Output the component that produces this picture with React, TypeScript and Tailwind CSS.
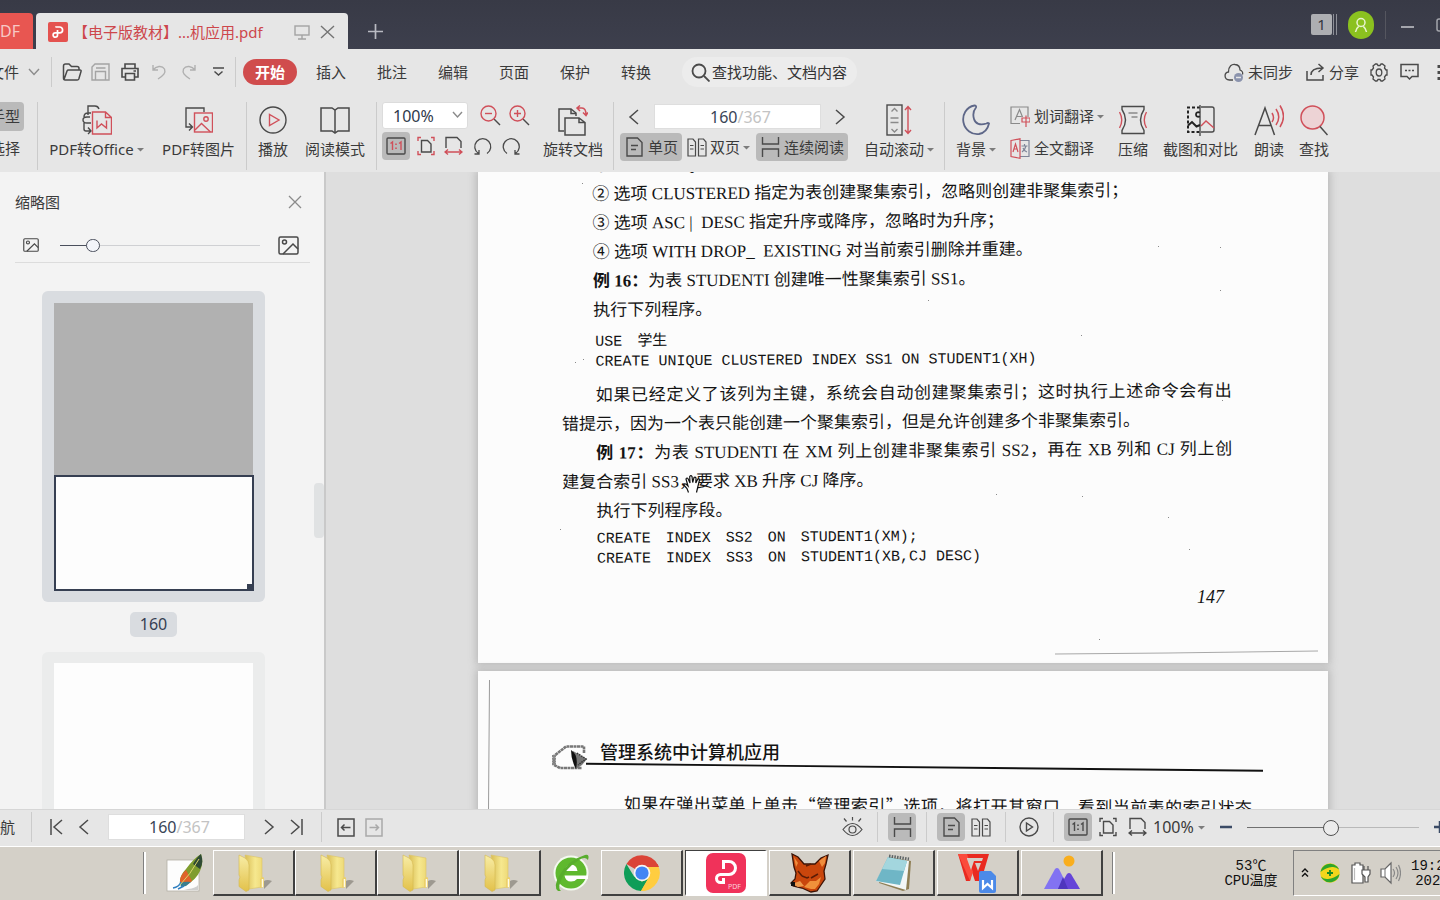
import type { ReactNode } from "react";

const INK = "#4a4a4a";
const RED = "#d0505a";

function Icon({
  w,
  h,
  children,
  color = INK,
  stroke = 1.4,
}: {
  w: number;
  h: number;
  children: ReactNode;
  color?: string;
  stroke?: number;
}) {
  return (
    <svg
      width={w}
      height={h}
      viewBox={`0 0 ${w} ${h}`}
      fill="none"
      stroke={color}
      strokeWidth={stroke}
      className="shrink-0"
      aria-hidden="true"
    >
      {children}
    </svg>
  );
}

function Caret() {
  return (
    <svg width="7" height="5" viewBox="0 0 7 5" className="shrink-0" aria-hidden="true">
      <path d="M0 1h7L3.5 4.5z" fill="#7c7c7c" />
    </svg>
  );
}

function BigButton({
  label,
  icon,
  className,
  caret = false,
}: {
  label: string;
  icon: ReactNode;
  className: string;
  caret?: boolean;
}) {
  return (
    <button type="button" className={"flex shrink-0 flex-col items-center gap-[3px] " + className}>
      <span className="flex h-8 items-center justify-center">{icon}</span>
      <span className="flex items-center gap-[3px] leading-5 whitespace-nowrap">
        {label}
        {caret && <Caret />}
      </span>
    </button>
  );
}

function Separator({ className }: { className: string }) {
  return <div className={"w-px shrink-0 bg-[#cbcbcb] " + className} />;
}

/* ---------- page display icons shared by the ribbon and the status bar ---------- */

function OneToOne({ accent }: { accent: string }) {
  return (
    <Icon w={20} h={18}>
      <rect x="1" y="1" width="18" height="16" rx="1" />
      <path d="M4.5 6.5 6.5 5v8M13 6.5 15 5v8" stroke={accent} />
      <path d="M10 6.5v1.5M10 10.5v1.5" stroke={accent} strokeWidth="1.6" />
    </Icon>
  );
}

function FitPage({ accent }: { accent: string }) {
  return (
    <Icon w={18} h={20}>
      <path d="M4.5 4.5h6L14 8v8H4.5z" />
      <path d="M1 5V1.5h3M14 1.5h3V5M1 15v3.5h3M14 18.5h3V15" stroke={accent} />
    </Icon>
  );
}

function FitWidth({ accent }: { accent: string }) {
  return (
    <Icon w={19} h={20}>
      <path d="M2 12V1.5h11l4 4V12" />
      <path d="M1 16h17M4 13.5 1 16l3 2.5M15 13.5l3 2.5-3 2.5" stroke={accent} />
    </Icon>
  );
}

function SinglePage() {
  return (
    <Icon w={17} h={20}>
      <path d="M1 1h10.5L16 5.500V19H1z" />
      <path d="M5 8.500h7M5 12.500h5" />
    </Icon>
  );
}

function DoublePage() {
  return (
    <Icon w={20} h={19} stroke={1.2}>
      <path d="M1 1h5l2.500 3v14H1zM11.500 1h5L19 4v14h-7.500z" />
      <path d="M3 7.500h3.500M3 11h3.500M13.500 7.500H17M13.500 11H17" />
    </Icon>
  );
}

function Continuous() {
  return (
    <Icon w={19} h={20}>
      <path d="M1.500 0v7h16V0M1.500 20v-8h16v8" />
    </Icon>
  );
}

function Chevron({ left = false, bar = false }: { left?: boolean; bar?: boolean }) {
  return (
    <Icon w={14} h={18} stroke={1.5}>
      {left ? <path d="M12 2 4 9l8 7" /> : <path d="m2 2 8 7-8 7" />}
      {bar && (left ? <path d="M1 1v16" /> : <path d="M13 1v16" />)}
    </Icon>
  );
}

/* ---------- title bar ---------- */

function TitleBar() {
  return (
    <header className="flex h-[49px] shrink-0 items-end bg-linear-to-b from-[#383a46] to-[#3d3f4d]">
      <button type="button" className="flex h-9 w-[33px] shrink-0 items-center justify-end overflow-hidden rounded-tr-sm bg-[#e85651] pr-[13px] text-base text-[#f7c9c5]">
        PDF
      </button>
      <div className="ml-[3px] flex h-9 w-[312px] shrink-0 items-center rounded-t-[4px] bg-[#e6e6e6] pt-[2px] pl-3">
        <svg width="20" height="20" viewBox="0 0 20 20" className="shrink-0" aria-hidden="true">
          <rect width="20" height="20" rx="2" fill="#e4524f" />
          <path d="M8 5.500V5h3.700a2.900 2.900 0 0 1 0 5.800H7.300a2.200 2.200 0 1 0 2.200 2.200V8" fill="none" stroke="#fff" strokeWidth="1.700" />
        </svg>
        <span className="ml-[5px] w-[195px] shrink-0 whitespace-nowrap text-[#cd474c]">【电子版教材】...机应用.pdf</span>
        <span className="ml-[26px]">
          <Icon w={16} h={15} color="#a3a3a3">
            <rect x="1" y="1" width="14" height="9" />
            <path d="M8 10v4M4 14h8" />
          </Icon>
        </span>
        <button type="button" aria-label="关闭标签" className="ml-[10px]">
          <Icon w={15} h={14} color="#747474">
            <path d="m1 1 13 12M14 1 1 13" />
          </Icon>
        </button>
      </div>
      <button type="button" aria-label="新建标签" className="mb-[10px] ml-5">
        <Icon w={15} h={15} color="#b9bac2" stroke={1.7}>
          <path d="M7.500 0v15M0 7.500h15" />
        </Icon>
      </button>
      <div className="ml-auto flex h-[49px] w-[129px] shrink-0 items-center overflow-hidden">
        <span className="flex h-[21px] w-[21px] shrink-0 items-center justify-center rounded-[2px] bg-[#adaeb2] text-[#33353f]">1</span>
        <Icon w={5} h={21} color="#8e9098" stroke={1}>
          <path d="M1.500 0v21M4.500 0v21" />
        </Icon>
        <button type="button" aria-label="账户" className="ml-[11px] flex h-7 w-[26px] shrink-0 items-center justify-center rounded-full bg-[#8bc11f]">
          <Icon w={14} h={16} color="#e9f4cf" stroke={1.5}>
            <circle cx="7" cy="5.500" r="4" />
            <path d="M1.500 15c.5-3 1.800-4.500 3.200-5.600M12.500 15c-.5-3-1.800-4.500-3.200-5.600" />
          </Icon>
        </button>
        <div className="ml-[11px] h-7 w-px shrink-0 bg-[#55565f]" />
        <button type="button" aria-label="最小化" className="mt-1 ml-[15px]">
          <Icon w={13} h={4} color="#a4a5ac" stroke={2}>
            <path d="M0 2h13" />
          </Icon>
        </button>
        <button type="button" aria-label="最大化" className="ml-[22px]">
          <Icon w={14} h={14} color="#a4a5ac" stroke={1.5}>
            <rect x="1" y="1" width="12" height="12" rx="2" />
          </Icon>
        </button>
      </div>
    </header>
  );
}

/* ---------- menu row ---------- */

const menuTabs = ["插入", "批注", "编辑", "页面", "保护", "转换"];

function MenuRow() {
  return (
    <nav className="flex h-12 shrink-0 items-center overflow-hidden bg-[#e6e6e6] pb-[2px]">
      <button type="button" className="-ml-[11px] flex w-[51px] shrink-0 items-center justify-between">
        文件
        <Icon w={12} h={8} color="#8c8c8c">
          <path d="m1 1 5 5.500L11 1" />
        </Icon>
      </button>
      <Separator className="ml-[11px] h-[30px]" />
      <button type="button" aria-label="打开" className="ml-[10px]">
        <Icon w={20} h={18} stroke={1.5}>
          <path d="M1.500 15V3Q1.500 1 3.500 1H7l2.500 2.500H15Q17 3.500 17 5.500V7M2 16.500 5 8q.4-1 1.500-1H18q1.500 0 1 1.500L16.800 16q-.4 1-1.500 1H3q-1.500 0-1.500-2" />
        </Icon>
      </button>
      <button type="button" aria-label="保存" className="ml-[9px]">
        <Icon w={19} h={18} color="#a4a4a4">
          <path d="M4 1h14v16H1V4z" />
          <path d="M4.500 17V8.500h10V17M5 5h9.500" />
        </Icon>
      </button>
      <button type="button" aria-label="打印" className="ml-[11px]">
        <Icon w={18} h={18} stroke={1.6}>
          <path d="M4 5V1h10v4M4 14H1V5.500h16V14h-3" />
          <path d="M4.500 10.500h9V17h-9zM12.500 8H15" />
        </Icon>
      </button>
      <button type="button" aria-label="撤销" className="ml-3">
        <Icon w={16} h={16} color="#b0b0b0">
          <path d="M2 1v5h5M2 6C5 2 11 1 13.500 5c1.500 4-1 6.500-6.500 10" />
        </Icon>
      </button>
      <button type="button" aria-label="恢复" className="ml-[14px]">
        <Icon w={16} h={16} color="#b0b0b0">
          <path d="M14 1v5H9M14 6C11 2 5 1 2.500 5c-1.500 4 1 6.500 6.500 10" />
        </Icon>
      </button>
      <button type="button" aria-label="更多" className="ml-4">
        <Icon w={11} h={10} stroke={1.5}>
          <path d="M0 1h11M1.500 4.500l4 3.500 4-3.500" />
        </Icon>
      </button>
      <Separator className="ml-[11px] h-[30px]" />
      <button type="button" className="ml-[7px] h-[26px] w-[54px] shrink-0 rounded-full bg-[#d04c4d] font-bold text-white">
        开始
      </button>
      <div className="ml-[19px] flex shrink-0 gap-[31px]">
        {menuTabs.map((tab) => (
          <button key={tab} type="button" className="whitespace-nowrap">
            {tab}
          </button>
        ))}
      </div>
      <label className="ml-[31px] flex h-[30px] w-[175px] shrink-0 items-center rounded-full bg-[#ececec] pl-[9px]">
        <Icon w={19} h={19} stroke={1.8}>
          <circle cx="8" cy="8" r="6.500" />
          <path d="m13 13 5.500 5.500" />
        </Icon>
        <input
          type="text"
          aria-label="查找"
          placeholder="查找功能、文档内容"
          className="ml-[2px] w-[140px] bg-transparent placeholder:text-[#333333] focus:outline-none"
        />
      </label>
      <div className="ml-auto flex w-[216px] shrink-0 items-center overflow-hidden">
        <button type="button" className="flex shrink-0 items-center gap-1">
          <Icon w={20} h={19} stroke={1.3}>
            <path d="M9 17H5.500C-.5 16.500 0 9.500 4.500 9 4.500 3 8 1 11 1.500c3 .3 5 2.500 5 5.500 2 .7 3.200 2.500 2.500 4.500" />
            <circle cx="14.500" cy="14.500" r="4.500" fill="#8b93ad" stroke="none" />
            <path d="M12 14.500h5" stroke="#e6e6e6" strokeWidth="1.500" />
          </Icon>
          未同步
        </button>
        <button type="button" className="ml-[13px] flex shrink-0 items-center gap-1">
          <Icon w={19} h={18} stroke={1.5}>
            <path d="M1 8v9h16v-5" />
            <path d="M5 12c0-5 4-7 11-7M12.500 1 17 5l-4.500 4" />
          </Icon>
          分享
        </button>
        <button type="button" aria-label="设置" className="ml-[11px]">
          <Icon w={18} h={19} stroke={1.3}>
            <path d="M5.500 1h1.500l1 1.500h2L11 1h1.500l2.500 2-.5 2 1.500 2h1v5h-1l-1.500 2 .5 2-2.500 2H11l-1-1.500H8L7 18H5.500L3 16l.5-2L2 12H1V7h1l1.500-2L3 3z" />
            <ellipse cx="9" cy="9.500" rx="2.800" ry="3.500" />
          </Icon>
        </button>
        <button type="button" aria-label="反馈" className="ml-3">
          <Icon w={19} h={18} stroke={1.5}>
            <path d="M1 1.500h17v12h-6L9.500 16 7 13.500H1z" />
            <path d="M5 7.500h2M8.500 7.500h2M12 7.500h2" />
          </Icon>
        </button>
        <button type="button" aria-label="更多选项" className="ml-[18px]">
          <Icon w={4} h={18} stroke={3}>
            <path d="M2 2v3M2 8v3M2 14v3" />
          </Icon>
        </button>
      </div>
    </nav>
  );
}

/* ---------- ribbon ---------- */

function Ribbon() {
  return (
    <div className="flex h-[75px] shrink-0 items-start overflow-hidden bg-[#e6e6e6] pt-[5px]">
      <div className="-ml-[14px] flex w-[38px] shrink-0 flex-col gap-[3px]">
        <button type="button" className="h-[29px] rounded-[4px] bg-[#bababa] whitespace-nowrap">
          手型
        </button>
        <button type="button" className="h-[29px] whitespace-nowrap">
          选择
        </button>
      </div>
      <Separator className="ml-[13px] h-[68px]" />
      <div className="flex shrink-0 pt-[2px]">
        <BigButton
          className="ml-[11px] w-[95px]"
          label="PDF转Office"
          caret
          icon={
            <Icon w={30} h={30}>
              <path d="M17 4q-1-3-4-3H6v9M8 12H5q-4 0-4 3t4 3h4M9 8H6q-4 0-4 4M2 18v6q0 2 2 2h4M6 22.500 9 26l-3 3" />
              <path d="M10.500 7h13l6 5.500V29h-19zM23.500 7v5.500h6M15 15.500V23l4.500-4 5 4v-7.500" stroke={RED} />
            </Icon>
          }
        />
        <BigButton
          className="ml-[18px] w-[73px]"
          label="PDF转图片"
          icon={
            <Icon w={28} h={28}>
              <path d="M19 6V2H1v19h6M4 17.500 7.500 21 4 24.500" />
              <rect x="9.500" y="7" width="18" height="19" stroke={RED} />
              <circle cx="21" cy="13" r="2.200" stroke={RED} />
              <path d="m10 24 6.500-6.500 9 8.500" stroke={RED} />
            </Icon>
          }
        />
      </div>
      <Separator className="ml-[11px] h-[68px]" />
      <div className="flex shrink-0 pt-[2px]">
        <BigButton
          className="ml-[11px] w-[30px]"
          label="播放"
          icon={
            <Icon w={28} h={28}>
              <circle cx="14" cy="14" r="13" />
              <path d="M10.500 8.500v11l9.500-5.500z" stroke={RED} />
            </Icon>
          }
        />
        <BigButton
          className="ml-[17px] w-[60px]"
          label="阅读模式"
          icon={
            <Icon w={30} h={28} stroke={1.5}>
              <path d="M1 2h11l3 2 3-2h11v23H18l-3 2-3-2H1zM15 4v22" />
            </Icon>
          }
        />
      </div>
      <Separator className="ml-[11px] h-[68px]" />
      <div className="ml-[5px] flex w-[152px] shrink-0 flex-col gap-[3px]">
        <div className="flex items-center">
          <div className="relative flex h-[27px] w-[86px] shrink-0">
            <select
              aria-label="缩放比例"
              className="w-full appearance-none rounded-[3px] border border-[#dcdcdc] bg-white pl-[10px] text-base leading-6 text-[#2f3a4b]"
            >
              <option>100%</option>
            </select>
            <span className="pointer-events-none absolute top-[9px] right-[5px]">
              <Icon w={11} h={8} color="#8a8a8a">
                <path d="m1 1 4.500 5L10 1" />
              </Icon>
            </span>
          </div>
          <button type="button" aria-label="缩小" className="ml-3">
            <Icon w={21} h={21}>
              <path d="m14 14 6 6" />
              <circle cx="8.500" cy="8.500" r="7.500" stroke={RED} />
              <path d="M5 8.500h7" stroke={RED} />
            </Icon>
          </button>
          <button type="button" aria-label="放大" className="ml-2">
            <Icon w={21} h={21}>
              <path d="m14 14 6 6" />
              <circle cx="8.500" cy="8.500" r="7.500" stroke={RED} />
              <path d="M5 8.500h7M8.500 5v7" stroke={RED} />
            </Icon>
          </button>
        </div>
        <div className="flex items-center">
          <button type="button" aria-label="实际大小" className="flex h-7 w-7 shrink-0 items-center justify-center rounded-[4px] bg-[#bababa]">
            <OneToOne accent={RED} />
          </button>
          <button type="button" aria-label="适合页面" className="ml-[7px]">
            <FitPage accent={RED} />
          </button>
          <button type="button" aria-label="适合宽度" className="ml-[9px]">
            <FitWidth accent={RED} />
          </button>
          <button type="button" aria-label="逆时针旋转" className="ml-[10px]">
            <Icon w={19} h={19} stroke={1.3}>
              <path d="M5.500 16.500A8 8 0 1 1 14 16.500M1.500 17h4.500v-4" />
            </Icon>
          </button>
          <button type="button" aria-label="顺时针旋转" className="ml-[10px]">
            <Icon w={19} h={19} stroke={1.3}>
              <path d="M13.500 16.500A8 8 0 1 0 5 16.500M17.500 17H13v-4" />
            </Icon>
          </button>
        </div>
      </div>
      <div className="flex shrink-0 pt-[2px]">
        <BigButton
          className="ml-[9px] w-[60px]"
          label="旋转文档"
          icon={
            <Icon w={30} h={31} stroke={1.5}>
              <path d="M6 26H1V4h12l5 4v3" />
              <path d="M13 4v4.500h5" />
              <path d="M7 13h14l6 4.500V30H7zM21 13v4.500h6" />
              <path d="M19 3h5q4 0 4 7M22 .5 19 3l3 3M25 7.500l3 3 2-3" stroke={RED} />
            </Icon>
          }
        />
      </div>
      <Separator className="ml-[10px] h-[68px]" />
      <div className="ml-[6px] flex w-[228px] shrink-0 flex-col gap-1 pt-[2px]">
        <div className="flex items-center">
          <button type="button" aria-label="上一页" className="ml-[6px]">
            <Chevron left />
          </button>
          <PageBox className="ml-[14px] h-[25px] w-[167px]" />
          <button type="button" aria-label="下一页" className="ml-[13px]">
            <Chevron />
          </button>
        </div>
        <div className="flex items-center">
          <button type="button" className="flex h-7 w-[62px] shrink-0 items-center gap-[5px] rounded-[4px] bg-[#bababa] pl-[6px] whitespace-nowrap">
            <SinglePage />
            单页
          </button>
          <button type="button" className="ml-[5px] flex w-[65px] shrink-0 items-center gap-[3px] whitespace-nowrap">
            <DoublePage />
            双页
            <Caret />
          </button>
          <button type="button" className="ml-[4px] flex h-7 w-[92px] shrink-0 items-center gap-1 rounded-[4px] bg-[#bababa] pl-[5px] whitespace-nowrap">
            <Continuous />
            连续阅读
          </button>
        </div>
      </div>
      <div className="flex shrink-0 pt-[2px]">
        <BigButton
          className="ml-4 w-[70px]"
          label="自动滚动"
          caret
          icon={
            <Icon w={26} h={32}>
              <rect x="1" y="1" width="15" height="30" />
              <path d="M5.500 7.500 8.500 4.500l3 3M5.500 25l3 3 3-3M4.500 14h8M4.500 18.500h8" stroke="#8a8a8a" />
              <path d="M22 3v26M19 6l3-3.500L25 6M19 26l3 3.500 3-3.500" stroke={RED} />
            </Icon>
          }
        />
      </div>
      <Separator className="ml-[10px] h-[68px]" />
      <div className="flex shrink-0 pt-[2px]">
        <BigButton
          className="ml-[11px] w-10"
          label="背景"
          caret
          icon={
            <Icon w={28} h={32} color="#5e6788" stroke={1.8}>
              <path d="M12.500 1.500C4 3 0 11 1.500 18.500S10 31 17 30q8-1.500 10-10.500-1-1-2.500 0C18 21.500 13.500 20 12 15S11.500 6.500 14 3.500q.5-2-1.500-2z" />
            </Icon>
          }
        />
      </div>
      <div className="ml-[14px] flex w-[96px] shrink-0 flex-col gap-[3px]">
        <button type="button" className="flex h-[29px] items-center whitespace-nowrap">
          <Icon w={20} h={21} stroke={1.2} color="#8a8a8a">
            <path d="M10 17.500H1V1h17v10M5 14 9.500 3.500 12.500 11M6.500 10.500h5" />
            <path d="M12 12h8v4h-8zM16 9.500V21" stroke={RED} />
          </Icon>
          <span className="mr-[3px] ml-1">划词翻译</span>
          <Caret />
        </button>
        <button type="button" className="flex h-[29px] items-center gap-1 whitespace-nowrap">
          <Icon w={20} h={21} stroke={1.2}>
            <path d="M10 2.500h9v16h-9M11.500 8h6M14.500 6v2M16 8q-1 4-4 6M13 10q1 3 4 4" stroke="#7f8598" />
            <path d="M1 2.500 10 .8v19.500L1 18.500zM3 14 5.500 6 8 14M4 11h3" stroke={RED} />
          </Icon>
          全文翻译
        </button>
      </div>
      <div className="flex shrink-0 pt-[2px]">
        <BigButton
          className="ml-3 w-[30px]"
          label="压缩"
          icon={
            <Icon w={28} h={30}>
              <path d="M3 1.500h22v3q-7 10.500 0 21v3H3v-3q7-10.500 0-21z" />
              <path d="M9.500 8h9M12.500 12h6" stroke="#8a8a8a" />
              <path d="M.5 7q4.500 8 0 16M27.500 7q-4.500 8 0 16" stroke={RED} />
            </Icon>
          }
        />
        <BigButton
          className="ml-[15px] w-[75px]"
          label="截图和对比"
          icon={
            <Icon w={28} h={32}>
              <path d="M14 3h11q2 0 2 2v21q0 2-2 2H14" />
              <path d="M13 3.500H1V28h13" stroke="#222" strokeWidth="2" strokeDasharray="3 2" />
              <path d="M13 1v31" />
              <path d="M1 21.500 5 18l4.500 4.500L13 21" stroke="#222" strokeWidth="2" />
              <path d="M13 8.500q-4-1-4 2t4 2" stroke="#222" strokeWidth="1.800" />
              <path d="m14 22 5-5 8 7" stroke={RED} />
            </Icon>
          }
        />
        <BigButton
          className="ml-4 w-[30px]"
          label="朗读"
          icon={
            <Icon w={30} h={32} stroke={1.5}>
              <path d="M1 31 11 4l9.500 27M4.500 21.500h13" />
              <path d="M18 9q3 5 0 9M22 5q5.500 8 0 16M26 1.500q7 11 0 21.500" stroke={RED} />
            </Icon>
          }
        />
        <BigButton
          className="ml-[15px] w-[30px]"
          label="查找"
          icon={
            <Icon w={28} h={32} stroke={1.5}>
              <circle cx="12.500" cy="13.500" r="11.500" stroke={RED} fill="#edd3d5" />
              <path d="m20 22.500 7.500 8.500" />
            </Icon>
          }
        />
      </div>
    </div>
  );
}

function PageBox({ className }: { className: string }) {
  return (
    <label className={"flex shrink-0 items-center border border-[#dedede] bg-white text-base text-[#3a4557] " + className}>
      <input type="text" aria-label="页码" defaultValue="160" className="w-1/2 bg-transparent text-right focus:outline-none" />
      <span className="text-[#c3c3c3]">/367</span>
    </label>
  );
}

/* ---------- thumbnails ---------- */

function PictureIcon({ size }: { size: "small" | "large" }) {
  const s = size === "small" ? 16 : 21;
  return (
    <svg width={s} height={s - 2} viewBox="0 0 21 19" preserveAspectRatio="none" fill="none" stroke="#484848" strokeWidth="1.500" className="shrink-0" aria-hidden="true">
      <rect x="1" y="1" width="19" height="17" rx="1.500" />
      <circle cx="6.500" cy="6" r="2" />
      <path d="m5 18 10-10 5 5" />
    </svg>
  );
}

function Thumbnails() {
  return (
    <aside className="relative flex w-[326px] shrink-0 flex-col overflow-hidden border-r-2 border-[#c9c9c9] bg-[#f3f3f3]">
      <div className="mt-5 ml-[15px] flex h-5 w-[287px] shrink-0 items-center justify-between text-[#3c3c3c]">
        <h2>缩略图</h2>
        <button type="button" aria-label="关闭缩略图">
          <Icon w={14} h={14} color="#8b8b8b" stroke={1.3}>
            <path d="m1 1 12 12M13 1 1 13" />
          </Icon>
        </button>
      </div>
      <div className="mt-4 ml-[15px] flex h-[35px] w-[295px] shrink-0 items-center border-b border-[#dcdcdc] pl-2">
        <PictureIcon size="small" />
        <input
          type="range"
          aria-label="缩略图大小"
          min="0"
          max="100"
          defaultValue="14"
          className="mr-[18px] ml-[21px] h-[14px] w-[200px] appearance-none bg-transparent [&::-webkit-slider-runnable-track]:h-px [&::-webkit-slider-runnable-track]:bg-linear-to-r [&::-webkit-slider-runnable-track]:from-[#4a4f5c] [&::-webkit-slider-runnable-track]:from-15% [&::-webkit-slider-runnable-track]:to-[#cfd0d3] [&::-webkit-slider-runnable-track]:to-15% [&::-webkit-slider-thumb]:-mt-[6px] [&::-webkit-slider-thumb]:h-[13px] [&::-webkit-slider-thumb]:w-[14px] [&::-webkit-slider-thumb]:appearance-none [&::-webkit-slider-thumb]:rounded-full [&::-webkit-slider-thumb]:border [&::-webkit-slider-thumb]:border-[#4a4f5c] [&::-webkit-slider-thumb]:bg-[#f3f5fa]"
        />
        <PictureIcon size="large" />
      </div>
      <div className="mt-7 ml-[42px] flex w-[223px] shrink-0 flex-col items-center">
        <div className="w-full rounded-[6px] bg-[#d9dce0] px-[11px] pt-3 pb-[11px]">
          <div className="mx-px h-[172px] bg-[#b1b1b1]" />
          <div className="ml-px flex h-[116px] items-end justify-end border-2 border-[#363f52] bg-[#fdfdfd]">
            <div className="h-[5px] w-[5px] bg-[#363f52]" />
          </div>
        </div>
        <span className="mt-[10px] h-[25px] w-[47px] rounded-[5px] bg-[#d9dce0] text-center text-base leading-[25px] text-[#363f52]">160</span>
        <div className="mt-[15px] h-[300px] w-full shrink-0 rounded-[6px] bg-[#ebecec] px-3 pt-[11px]">
          <div className="h-full bg-[#fdfdfd]" />
        </div>
      </div>
      <div className="absolute top-[311px] right-0 h-[55px] w-[10px] rounded-[4px] bg-[#e0e2e3]" />
    </aside>
  );
}

/* ---------- document ---------- */

const specks = [
  [104, 11], [105, 187], [97, 190], [680, 74], [742, 75], [742, 118], [603, 163], [82, 357],
  [518, 322], [604, 324], [690, 345], [711, 377], [621, 467], [450, 128], [744, 228],
];

function PageOne() {
  return (
    <article className="relative flex w-[850px] shrink-0 flex-col overflow-hidden bg-[#fcfcfc] pr-[98px] pb-14 pl-[82px] shadow-[0_0_8px_2px_#b8b8b8]">
      <div className="-mt-[21px] origin-top-left rotate-[-0.4deg] whitespace-nowrap">
        <div className="pl-8 text-[17px] leading-[29px]">
          <p>① 选项 UNIQUE 指定唯一索引；</p>
          <p>② 选项 CLUSTERED 指定为表创建聚集索引，忽略则创建非聚集索引；</p>
          <p>③ 选项 ASC | &nbsp;DESC 指定升序或降序，忽略时为升序；</p>
          <p>④ 选项 WITH DROP_ &nbsp;EXISTING 对当前索引删除并重建。</p>
          <p>
            <b>例 16：</b>为表 STUDENTI 创建唯一性聚集索引 SS1。
          </p>
          <p>执行下列程序。</p>
        </div>
        <div className="mt-2 pl-[34px] font-['Liberation_Mono','Noto_Sans_CJK_SC',monospace] text-[15px] leading-5">
          <p className="flex gap-[15px]">
            <span>USE</span>
            <span>学生</span>
          </p>
          <p>CREATE UNIQUE CLUSTERED INDEX SS1 ON STUDENT1(XH)</p>
        </div>
        <div className="mt-2 text-[17px] leading-[29px]">
          <p className="pl-[34px] [text-align-last:justify]">如果已经定义了该列为主键，系统会自动创建聚集索引；这时执行上述命令会有出</p>
          <p>错提示，因为一个表只能创建一个聚集索引，但是允许创建多个非聚集索引。</p>
          <p className="pl-[34px] [text-align-last:justify]">
            <b>例 17：</b>为表 STUDENTI 在 XM 列上创建非聚集索引 SS2，再在 XB 列和 CJ 列上创
          </p>
          <p>建复合索引 SS3，要求 XB 升序 CJ 降序。</p>
          <p className="pl-[34px]">执行下列程序段。</p>
        </div>
        <div className="mt-1 pl-[34px] font-['Liberation_Mono','Noto_Sans_CJK_SC',monospace] text-[15px] leading-5">
          <p className="flex gap-[15px]">
            <span>CREATE</span>
            <span>INDEX</span>
            <span>SS2</span>
            <span>ON</span>
            <span>STUDENT1(XM);</span>
          </p>
          <p className="flex gap-[15px]">
            <span>CREATE</span>
            <span>INDEX</span>
            <span>SS3</span>
            <span>ON</span>
            <span>STUDENT1(XB,CJ DESC)</span>
          </p>
        </div>
      </div>
      <p className="mt-[17px] pr-[6px] text-right text-[18px] leading-5 italic">147</p>
      <svg width="850" height="491" viewBox="0 0 850 491" className="pointer-events-none absolute top-0 left-0" aria-hidden="true">
        {specks.map(([x, y]) => (
          <rect key={`${x}-${y}`} x={x} y={y} width="1" height="1" fill="#8a8a8a" />
        ))}
        <path d="M577 482 690 481 840 479" stroke="#a8a8a8" fill="none" />
      </svg>
      <svg width="18" height="20" viewBox="0 0 18 20" className="pointer-events-none absolute top-[302px] left-[205px]" aria-hidden="true">
        <path
          d="M5.500 18.500 4 14.500.8 11q.5-2 2.500-.7L5 12 3 5q1-2 2.200 0L7 9 6.700 2.500Q8 .8 9 2.500L9.700 8.500 11 3.500q1.200-1 2 .5L12.800 9l2-4q1.500-.5 1.700 1L14.800 13 13.500 18.500"
          fill="#fff"
          stroke="#111"
          strokeWidth="1.200"
        />
      </svg>
    </article>
  );
}

function PageTwo() {
  return (
    <article className="relative mt-2 flex h-[491px] w-[850px] shrink-0 flex-col bg-[#fcfcfc] shadow-[0_0_8px_2px_#b8b8b8]">
      <h1 className="mt-[68px] ml-[122px] font-['Noto_Sans_CJK_SC',sans-serif] text-[18px] leading-6 font-medium">管理系统中计算机应用</h1>
      <p className="mt-7 ml-[146px] w-[628px] origin-top-left rotate-[0.4deg] text-[17px] leading-6 whitespace-nowrap [text-align-last:justify]">
        如果在弹出菜单上单击<span className="font-['Noto_Sans_CJK_SC',sans-serif]">“管理索引”</span>选项，将打开其窗口，看到当前表的索引状态
      </p>
      <svg width="850" height="140" viewBox="0 0 850 140" fill="none" className="pointer-events-none absolute top-0 left-0" aria-hidden="true">
        <path d="M11.500 9 10.500 140" stroke="#9a9a9a" />
        <path d="M108 92.800 785 99.700" stroke="#111" strokeWidth="1.900" />
        <path d="M106 82v-6.500H88L76 85v9l6 3h22" stroke="#777" strokeWidth="2.600" strokeDasharray="3 .5" />
        <path d="M76 84v11" stroke="#888" strokeWidth="4" strokeDasharray="2 .7" />
        <path d="m95 80 14 8-5 6-6 4-2-8z" fill="#777" />
        <path d="M93 79q8 5 5 19-5-9-5-19z" fill="#111" />
        <path d="m99 82 9 6-8 6" stroke="#333" strokeWidth="1.500" strokeDasharray="1.500 1" />
      </svg>
    </article>
  );
}

/* ---------- status bar ---------- */

function StatusBar() {
  return (
    <div className="flex h-[37px] shrink-0 items-center overflow-hidden border-t border-[#d6d6d6] bg-[#e6e6e6] pb-[2px]">
      <button type="button" className="-ml-[15px] w-[30px] shrink-0 whitespace-nowrap">
        导航
      </button>
      <Separator className="ml-4 h-[30px]" />
      <button type="button" aria-label="首页" className="ml-[18px]">
        <Chevron left bar />
      </button>
      <button type="button" aria-label="上一页" className="ml-3">
        <Chevron left />
      </button>
      <PageBox className="ml-[18px] h-[26px] w-[137px]" />
      <button type="button" aria-label="下一页" className="ml-[18px]">
        <Chevron />
      </button>
      <button type="button" aria-label="末页" className="ml-[12px]">
        <Chevron bar />
      </button>
      <Separator className="ml-[18px] h-[30px]" />
      <button type="button" aria-label="后退" className="ml-[15px]">
        <Icon w={18} h={19} stroke={1.5}>
          <rect x="1" y="1" width="16" height="17" />
          <path d="M4.500 9.500h9M7.500 6.500l-3 3 3 3" />
        </Icon>
      </button>
      <button type="button" aria-label="前进" className="ml-[10px]">
        <Icon w={18} h={19} color="#a9a9a9" stroke={1.5}>
          <rect x="1" y="1" width="16" height="17" />
          <path d="M4.500 9.500h9M10.500 6.500l3 3-3 3" />
        </Icon>
      </button>
      <div className="ml-auto flex w-[598px] shrink-0 items-center overflow-hidden">
        <button type="button" aria-label="护眼模式">
          <Icon w={21} h={20} stroke={1.2}>
            <path d="M1 12.500q9.500-12 19 0-9.500 12-19 0z" />
            <circle cx="10.500" cy="12.500" r="3.500" />
            <path d="M10.500 0v3.500M2 1.500l2.500 3M19 1.500l-2.500 3" />
          </Icon>
        </button>
        <Separator className="ml-[14px] h-[30px]" />
        <button type="button" aria-label="连续阅读" className="ml-[10px] flex h-7 w-7 shrink-0 items-center justify-center rounded-[4px] bg-[#bababa]">
          <Continuous />
        </button>
        <Separator className="ml-[10px] h-[30px]" />
        <button type="button" aria-label="单页" className="ml-[10px] flex h-7 w-7 shrink-0 items-center justify-center rounded-[4px] bg-[#bababa]">
          <SinglePage />
        </button>
        <button type="button" aria-label="双页" className="ml-[6px]">
          <DoublePage />
        </button>
        <Separator className="ml-[14px] h-[30px]" />
        <button type="button" aria-label="播放" className="ml-[13px]">
          <Icon w={20} h={20}>
            <circle cx="10" cy="10" r="9" />
            <path d="M7.500 6v8l6-4z" />
          </Icon>
        </button>
        <Separator className="ml-[14px] h-[30px]" />
        <button type="button" aria-label="实际大小" className="ml-[10px] flex h-7 w-7 shrink-0 items-center justify-center rounded-[4px] bg-[#bababa]">
          <OneToOne accent={INK} />
        </button>
        <button type="button" aria-label="适合页面" className="ml-[7px]">
          <FitPage accent={INK} />
        </button>
        <button type="button" aria-label="适合宽度" className="ml-[11px]">
          <FitWidth accent={INK} />
        </button>
        <button type="button" className="ml-[6px] flex w-[52px] shrink-0 items-center justify-between text-base">
          100%
          <Caret />
        </button>
        <button type="button" aria-label="缩小" className="ml-[15px]">
          <Icon w={12} h={12} color="#3b4b66" stroke={2.5}>
            <path d="M0 6h12" />
          </Icon>
        </button>
        <input
          type="range"
          aria-label="缩放"
          min="0"
          max="100"
          defaultValue="49"
          className="ml-[15px] h-[18px] w-[172px] shrink-0 appearance-none bg-transparent [&::-webkit-slider-runnable-track]:h-px [&::-webkit-slider-runnable-track]:bg-linear-to-r [&::-webkit-slider-runnable-track]:from-[#707070] [&::-webkit-slider-runnable-track]:from-50% [&::-webkit-slider-runnable-track]:to-[#b9b9b9] [&::-webkit-slider-runnable-track]:to-50% [&::-webkit-slider-thumb]:-mt-[7px] [&::-webkit-slider-thumb]:h-4 [&::-webkit-slider-thumb]:w-4 [&::-webkit-slider-thumb]:appearance-none [&::-webkit-slider-thumb]:rounded-full [&::-webkit-slider-thumb]:border [&::-webkit-slider-thumb]:border-[#505050] [&::-webkit-slider-thumb]:bg-[#ececec]"
        />
        <button type="button" aria-label="放大" className="ml-[15px]">
          <Icon w={12} h={12} color="#3b4b66" stroke={2.5}>
            <path d="M0 6h12M6 0v12" />
          </Icon>
        </button>
      </div>
    </div>
  );
}

/* ---------- taskbar ---------- */

function FolderIcon() {
  return (
    <svg width="36" height="40" viewBox="0 0 36 40" aria-hidden="true">
      <defs>
        <linearGradient id="folder-back" x1="0" y1="0" x2="1" y2="0">
          <stop offset="0" stopColor="#d9bd55" />
          <stop offset=".6" stopColor="#f6e88f" />
          <stop offset="1" stopColor="#eeda78" />
        </linearGradient>
        <linearGradient id="folder-front" x1="0" y1="0" x2="0" y2="1">
          <stop offset="0" stopColor="#f8eda6" />
          <stop offset="1" stopColor="#e2c14a" />
        </linearGradient>
      </defs>
      <path d="m27 36 8-8q-5-2-8 0z" fill="#8f8b82" opacity=".8" />
      <path d="m8 2 17 3v29l-13 2z" fill="url(#folder-back)" stroke="#dcc567" strokeWidth=".6" />
      <path d="m2 2 6 3q4 3 4 7v25l-3 1.500-7-5V27l1-3-1-2z" fill="url(#folder-front)" stroke="#d5b94f" strokeWidth=".6" />
      <path d="M23 26q4-4 4 0v8l-4 1z" fill="#ecd06a" />
      <path d="M25.500 26v8" stroke="#fffbe6" strokeWidth="1.500" />
    </svg>
  );
}

function FoxIcon() {
  return (
    <svg width="40" height="40" viewBox="0 0 40 40" aria-hidden="true">
      <path d="M2 1 4 14 6 20 5 26 1 30 3 33l9 2 9 4 6-1 4-6 4-6-1-8 2-7 2-9-7 3-6 6H14L8 4z" fill="#c9460c" stroke="#3b1306" strokeWidth="1.300" />
      <path d="m4 4 2 10 2-4zM36 3l-7 5 3 6 3-4z" fill="#ef8d3d" />
      <path d="m14 34 6-6h6l5-4-2 7-4 5h-4z" fill="#f0913b" />
      <path d="m2 31 8-3 4 5-6 1z" fill="#ee9a4c" />
      <path d="m12 23 5 2 2-1M21 25l7-4M16 13l5-2M8 18l4 5" stroke="#5a1c06" strokeWidth="1.500" fill="none" />
      <path d="M1 29h4v4H1z" fill="#111" />
    </svg>
  );
}

function ParrotPdfIcon() {
  return (
    <svg width="40" height="40" viewBox="0 0 40 40" aria-hidden="true">
      <rect width="40" height="40" rx="7" fill="#f0325a" />
      <path
        d="M17.500 16V8.500H23a6.500 6.500 0 0 1 0 13H14.500a4 4 0 0 0 0 8h3V25"
        fill="none"
        stroke="#fff"
        strokeWidth="3"
      />
      <text x="22" y="36" fontSize="7" fill="#fbd0da" fontFamily="Noto Sans, sans-serif">
        PDF
      </text>
    </svg>
  );
}

function ChromeIcon() {
  return (
    <svg width="36" height="36" viewBox="0 0 36 36" aria-hidden="true">
      <path d="M18 18 2.400 9A18 18 0 0 1 33.600 9.500z" fill="#db4437" />
      <path d="M18 18 33.600 9.500A18 18 0 0 1 17 36z" fill="#ffcd40" />
      <path d="M18 9h15.600L35 12H18z" fill="#db4437" />
      <path d="M18 18 17 36A18 18 0 0 1 2.400 9l8 13z" fill="#0f9d58" />
      <path d="M10 21 17 27l7-3-7 12z" fill="#0f9d58" />
      <path d="m25 22-8 14c10 0 18-8 18-18q0-3-1-6H22z" fill="#ffcd40" />
      <circle cx="18" cy="18" r="8.300" fill="#f5f5f5" />
      <circle cx="18" cy="18" r="6.600" fill="#4285f4" />
    </svg>
  );
}

function NotepadIcon() {
  return (
    <svg width="38" height="38" viewBox="0 0 38 38" aria-hidden="true">
      <path d="m14 3 22 4-2 28-6 2L4 29z" fill="#8f7f55" />
      <path d="m14 4 20 3-3 29L1 27z" fill="#f3f7f7" />
      <path d="m13 3 19 4-7 24L1 27z" fill="#6fb6c6" />
      <path d="m13 3 19 4-3 10L7 15z" fill="#a3d6de" />
      <path d="m14 2 20 3" stroke="#5c6365" strokeWidth="3" strokeDasharray="1.500 1.200" />
    </svg>
  );
}

function WpsIcon() {
  return (
    <svg width="40" height="42" viewBox="0 0 40 42" aria-hidden="true">
      <path d="M0 2h31l-8 27h-6l-3-9-2 9H8z" fill="#e92a20" />
      <path d="M0 2h9l6 18-3 9z" fill="#fb4b3c" />
      <path d="m9 7 4 11 3-9h8l1-3H9z" fill="#d4d0c8" />
      <path d="m17 11 3 8 3-8z" fill="#d4d0c8" />
      <path d="M23 19h10l5 5v15q0 2-2 2H23q-2 0-2-2V21q0-2 2-2z" fill="#4c8ae8" />
      <path d="M25 28v8l4.500-4 4.500 4v-8" fill="none" stroke="#fff" strokeWidth="2.200" />
    </svg>
  );
}

function MountainIcon() {
  return (
    <svg width="38" height="36" viewBox="0 0 38 36" aria-hidden="true">
      <path d="M1 34 12 14q2-2 4 0l10 20z" fill="#8273f2" />
      <path d="m15 34 9-15q2-2 4 0l9 15z" fill="#6545d8" />
      <path d="M20 22 25 34H15z" fill="#4e36bd" />
      <circle cx="26" cy="6" r="5.500" fill="#f9ae1d" />
    </svg>
  );
}

const tasks: { name: string; icon: ReactNode; active?: boolean }[] = [
  { name: "Chrome", icon: <ChromeIcon /> },
  { name: "PDF", icon: <ParrotPdfIcon />, active: true },
  { name: "Fox", icon: <FoxIcon /> },
  { name: "记事本", icon: <NotepadIcon /> },
  { name: "WPS", icon: <WpsIcon /> },
  { name: "图片", icon: <MountainIcon /> },
];

const raised = "border-t-white border-l-white border-r-[#404040] border-b-[#404040] bg-[#d4d0c8]";
const sunken = "border-t-[#404040] border-l-[#404040] border-r-white border-b-white bg-white";

function Taskbar() {
  return (
    <footer className="flex h-[54px] shrink-0 items-start overflow-hidden border-t border-white bg-[#d4d0c8] pt-[3px]">
      <div className="mt-[2px] ml-[143px] h-[42px] w-[3px] shrink-0 border-r-2 border-l border-r-white border-l-[#808080]" />
      <button type="button" aria-label="画笔" className="mt-[3px] ml-5">
        <svg width="37" height="40" viewBox="0 0 37 40" aria-hidden="true">
          <rect x="1" y="7" width="32" height="31" fill="#fdfdfd" stroke="#b3afa6" strokeWidth=".8" />
          <path d="M22 36q8-1 10-4v5H18z" fill="#cfcfcf" />
          <path d="M35 1q3 9-1 17-4 9-14 14l-6-1q-1-8 6-15Q27 6 35 1z" fill="#7f9d2e" />
          <path d="M35 1q3 9-1 15l-7-5q4-7 8-10z" fill="#2f4a35" />
          <path d="m14 31q-1-8 6-14l6 11-7 5z" fill="#e0632b" />
          <path d="M14 30q6-2 11-1l-5 4-5 1z" fill="#3a7f8f" />
          <path d="M7 35q6-1 8-6M12 36l6-3" stroke="#2f7fc0" strokeWidth="1.500" fill="none" />
          <path d="M14 32Q24 22 33 6" stroke="#d9d36a" strokeWidth="1" fill="none" />
        </svg>
      </button>
      <div className="ml-[10px] flex shrink-0">
        {[1, 2, 3, 4].map((n) => (
          <button key={n} type="button" aria-label={`文件夹 ${n}`} className={"flex h-[46px] w-[82px] items-center justify-center border-t border-r-2 border-b-2 border-l pl-[2px] " + raised}>
            <FolderIcon />
          </button>
        ))}
      </div>
      <button type="button" aria-label="浏览器" className="mt-[3px] ml-[11px]">
        <svg width="38" height="40" viewBox="0 0 38 40" fill="none" aria-hidden="true">
          <circle cx="19" cy="20" r="17.500" fill="#f4faf0" />
          <circle cx="19" cy="20" r="15.500" fill="#5fb92e" />
          <path d="M12.500 18q1-6.500 6.500-6.500t6.500 6.500z" fill="#fff" />
          <path d="M12.500 22.500H36v3.500H25q-2 2.500-6 2.500-5.500 0-6.500-6z" fill="#fff" />
          <path d="M6 38Q1 34 7 23 16 7 33 2q5-1 3 5-3-4-9 0Q12 16 8 30q-2 6 1 8z" fill="#58ad2d" />
        </svg>
      </button>
      <div className="ml-[11px] flex shrink-0 gap-[2px]">
        {tasks.map((task) => (
          <button
            key={task.name}
            type="button"
            aria-label={task.name}
            className={"flex h-[46px] w-[82px] items-center justify-center border-t border-r-2 border-b-2 border-l " + (task.active ? sunken : raised)}
          >
            {task.icon}
          </button>
        ))}
      </div>
      <div className="mt-[2px] ml-[9px] h-[42px] w-[3px] shrink-0 border-r-2 border-l border-r-white border-l-[#808080]" />
      <div className="ml-auto flex shrink-0 items-start overflow-hidden font-['Liberation_Mono','Noto_Sans_CJK_SC',monospace] text-[14px] leading-[15px] text-[#111111]">
        <p className="mt-[9px] w-[56px] text-center whitespace-nowrap">
          53℃
          <br />
          CPU温度
        </p>
        <div className="ml-[14px] flex h-[46px] w-[147px] items-start overflow-hidden border-t border-b border-l border-t-[#808080] border-b-white border-l-[#808080] pt-2">
          <span className="mt-2 ml-[7px]">
            <Icon w={8} h={11} color="#111">
              <path d="m1 5 3-3 3 3M1 9.500l3-3 3 3" />
            </Icon>
          </span>
          <svg width="20" height="24" viewBox="0 0 20 24" className="mt-[2px] ml-[11px] shrink-0" aria-hidden="true">
            <circle cx="10" cy="12" r="9.800" fill="#f3d61c" />
            <path d="M.5 11A9.800 9.800 0 0 1 17 5.500q1.500 1.500 2 3-3-3-7-2.500-6 .5-11.500 5z" fill="#2ea52c" />
            <path d="M19.500 13A9.800 9.800 0 0 1 3 18.500q-1.500-1.500-2-3 3 3 7 2.500 6-.5 11.500-5z" fill="#2ea52c" />
            <path d="M10 9v6M7 12h6" stroke="#178a25" strokeWidth="1.800" />
          </svg>
          <svg width="20" height="24" viewBox="0 0 20 24" className="mt-[2px] ml-[11px] shrink-0" fill="#fff" stroke="#555" strokeWidth="1.200" aria-hidden="true">
            <path d="M1 4h3V2h5v2h3v18H1z" />
            <path d="M3.500 7v12" stroke="#bbb" />
            <path d="M11 9h8v4l-2 3v5h-3v-5l-3-3zM13 9V5M17 9V5" />
          </svg>
          <svg width="21" height="24" viewBox="0 0 21 24" className="mt-[2px] ml-[9px] shrink-0" fill="none" stroke="#666" strokeWidth="1.200" aria-hidden="true">
            <path d="M1 8h4l6-6v20l-6-6H1z" fill="#fff" />
            <path d="M5 8v8M13 8q3 4 0 8M16 6q4 6 0 12M18.500 4q4 8 0 16" stroke="#888" />
          </svg>
          <p className="ml-[10px] text-center whitespace-nowrap">
            19:2
            <br />
            202
          </p>
        </div>
      </div>
    </footer>
  );
}

export default function App() {
  return (
    <div className="flex h-screen flex-col overflow-hidden bg-[#e6e6e6] font-['Noto_Sans','Noto_Sans_CJK_SC',sans-serif] text-[15px] text-[#3a3a3a]">
      <TitleBar />
      <MenuRow />
      <Ribbon />
      <div className="flex min-h-0 flex-1">
        <Thumbnails />
        <main className="flex min-w-0 flex-1 flex-col overflow-hidden bg-[#dedede] pl-[152px] font-['Liberation_Serif','Noto_Sans_CJK_SC',serif] text-[#141414]">
          <PageOne />
          <PageTwo />
        </main>
      </div>
      <StatusBar />
      <Taskbar />
    </div>
  );
}
